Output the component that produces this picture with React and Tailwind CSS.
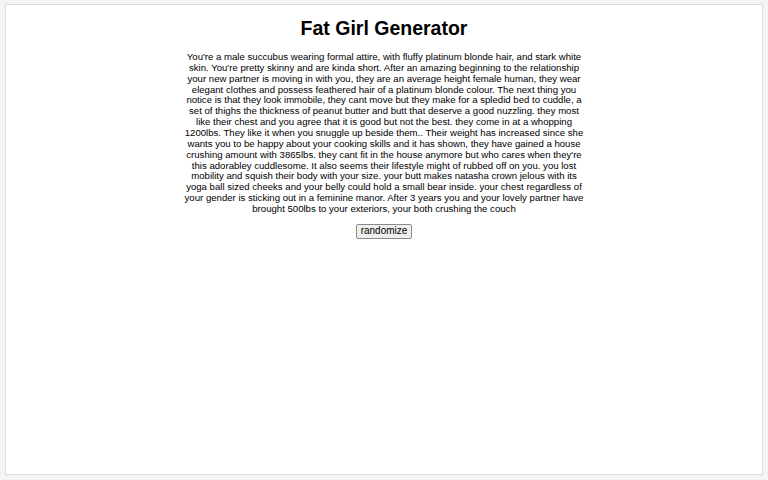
import React, { useState } from 'react';

const story =
  "You're a male succubus wearing formal attire, with fluffy platinum blonde hair, and stark white skin. You're pretty skinny and are kinda short. After an amazing beginning to the relationship your new partner is moving in with you, they are an average height female human, they wear elegant clothes and possess feathered hair of a platinum blonde colour. The next thing you notice is that they look immobile, they cant move but they make for a spledid bed to cuddle, a set of thighs the thickness of peanut butter and butt that deserve a good nuzzling. they most like their chest and you agree that it is good but not the best. they come in at a whopping 1200lbs. They like it when you snuggle up beside them.. Their weight has increased since she wants you to be happy about your cooking skills and it has shown, they have gained a house crushing amount with 3865lbs. they cant fit in the house anymore but who cares when they're this adorabley cuddlesome. It also seems their lifestyle might of rubbed off on you. you lost mobility and squish their body with your size. your butt makes natasha crown jelous with its yoga ball sized cheeks and your belly could hold a small bear inside. your chest regardless of your gender is sticking out in a feminine manor. After 3 years you and your lovely partner have brought 500lbs to your exteriors, your both crushing the couch";

export default function App() {
  const [text] = useState(story);

  return (
    <div className="h-[480px] bg-[#f4f4f4] p-[4px_5px_4px_5px] font-['Liberation_Sans',Arial,sans-serif] text-black">
      <div className="h-[471px] w-[758px] border border-[#dcdcdc] bg-white flex flex-col items-center">
        <h1 className="mt-[11px] text-[19.5px] font-bold leading-[24px]">Fat Girl Generator</h1>
        <p className="mt-[12px] w-[402px] text-center text-[9.6px] leading-[10.86px]">{text}</p>
        <button
          type="button"
          className="mt-[9px] h-[15px] rounded-[2px] border border-[#8a8a8a] bg-[#efefef] px-[4px] text-[10px] leading-[12px]"
        >
          randomize
        </button>
      </div>
    </div>
  );
}
